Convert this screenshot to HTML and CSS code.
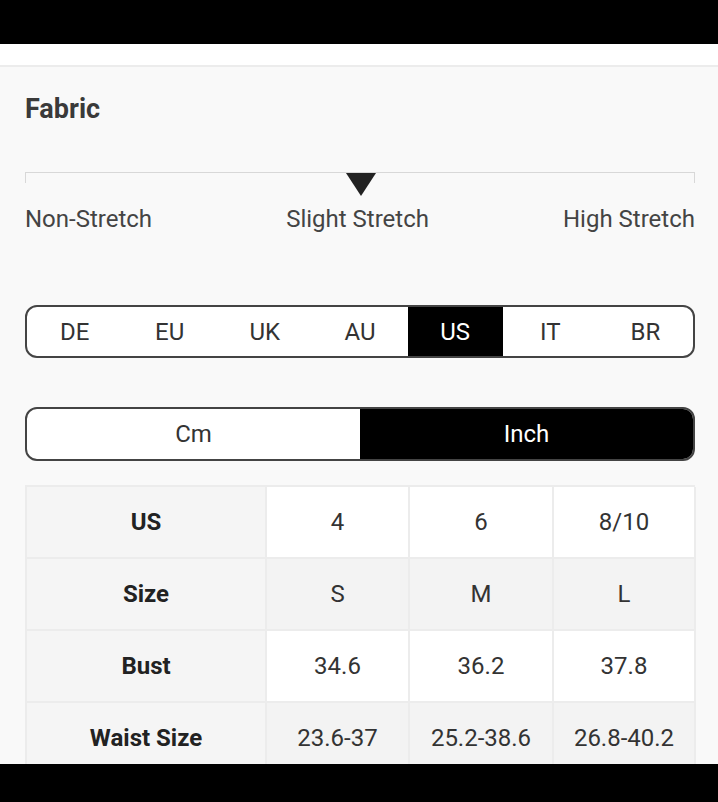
FILE: index.html
```html
<!DOCTYPE html>
<html>
<head>
<meta charset="utf-8">
<link rel="stylesheet" href="styles.css">
</head>
<body>
<div class="topbar"></div>
<div class="whitestrip"></div>
<main class="panel">
  <h2 class="title">Fabric</h2>
  <div class="stretch">
    <div class="track">
      <div class="marker"></div>
    </div>
    <div class="labels">
      <span>Non-Stretch</span>
      <span>Slight Stretch</span>
      <span>High Stretch</span>
    </div>
  </div>
  <div class="regions">
    <div class="reg">DE</div>
    <div class="reg">EU</div>
    <div class="reg">UK</div>
    <div class="reg">AU</div>
    <div class="reg active">US</div>
    <div class="reg">IT</div>
    <div class="reg">BR</div>
  </div>
  <div class="units">
    <div class="unit">Cm</div>
    <div class="unit active">Inch</div>
  </div>
  <div class="table">
    <div class="cell head">US</div><div class="cell">4</div><div class="cell">6</div><div class="cell">8/10</div>
    <div class="cell head">Size</div><div class="cell alt">S</div><div class="cell alt">M</div><div class="cell alt">L</div>
    <div class="cell head">Bust</div><div class="cell">34.6</div><div class="cell">36.2</div><div class="cell">37.8</div>
    <div class="cell head">Waist Size</div><div class="cell alt">23.6-37</div><div class="cell alt">25.2-38.6</div><div class="cell alt">26.8-40.2</div>
  </div>
</main>
<div class="bottombar"></div>
</body>
</html>
```
FILE: styles.css
```css
html, body {
  margin: 0;
  padding: 0;
  width: 718px;
  height: 802px;
  overflow: hidden;
  background: #f9f9f9;
  font-family: Roboto, "Liberation Sans", sans-serif;
  color: #333;
}
body {
  position: relative;
}
.topbar {
  height: 44px;
  background: #000;
}
.whitestrip {
  height: 21px;
  background: #fff;
  border-bottom: 2px solid #ececec;
}
.panel {
  padding: 0 23px 0 25px;
  height: 737px;
  overflow: hidden;
}
.title {
  margin: 0;
  padding-top: 26px;
  font-size: 27px;
  font-weight: 700;
  color: #3a3a3a;
  line-height: 32px;
  letter-spacing: 0;
}
.stretch {
  margin-top: 47px;
}
.track {
  position: relative;
  height: 10px;
  border: 1.5px solid #d8d8d8;
  border-bottom: none;
}
.marker {
  position: absolute;
  left: 320px;
  top: 0;
  width: 0;
  height: 0;
  border-left: 15px solid transparent;
  border-right: 15px solid transparent;
  border-top: 23px solid #222;
}
.labels {
  display: flex;
  justify-content: space-between;
  margin-top: 22px;
  font-size: 24px;
  line-height: 28px;
  color: #444;
}
.regions {
  margin-top: 72px;
  display: grid;
  grid-template-columns: repeat(7, 1fr);
  height: 49px;
  border: 2px solid #444;
  border-radius: 12px;
  overflow: hidden;
  background: #fff;
}
.reg {
  display: flex;
  align-items: center;
  justify-content: center;
  font-size: 24px;
  color: #333;
}
.reg.active {
  background: #000;
  color: #fff;
}
.units {
  margin-top: 49px;
  display: grid;
  grid-template-columns: 1fr 1fr;
  height: 50px;
  border: 2px solid #444;
  border-radius: 12px;
  overflow: hidden;
  background: #fff;
}
.unit {
  display: flex;
  align-items: center;
  justify-content: center;
  font-size: 24px;
  color: #333;
}
.unit.active {
  background: #000;
  color: #fff;
}
.table {
  margin-top: 24px;
  display: grid;
  grid-template-columns: 240px 143px 144px 142px;
  grid-auto-rows: 72px;
  border-top: 2px solid #ececec;
  border-left: 2px solid #ececec;
}
.cell {
  display: flex;
  align-items: center;
  justify-content: center;
  font-size: 24px;
  color: #333;
  background: #fff;
  border-right: 2px solid #ececec;
  border-bottom: 2px solid #ececec;
}
.cell.alt {
  background: #f3f3f3;
}
.cell.head {
  background: #f5f5f5;
  font-weight: 700;
  color: #222;
}
.bottombar {
  position: absolute;
  left: 0;
  top: 764px;
  width: 718px;
  height: 38px;
  background: #000;
}
```
